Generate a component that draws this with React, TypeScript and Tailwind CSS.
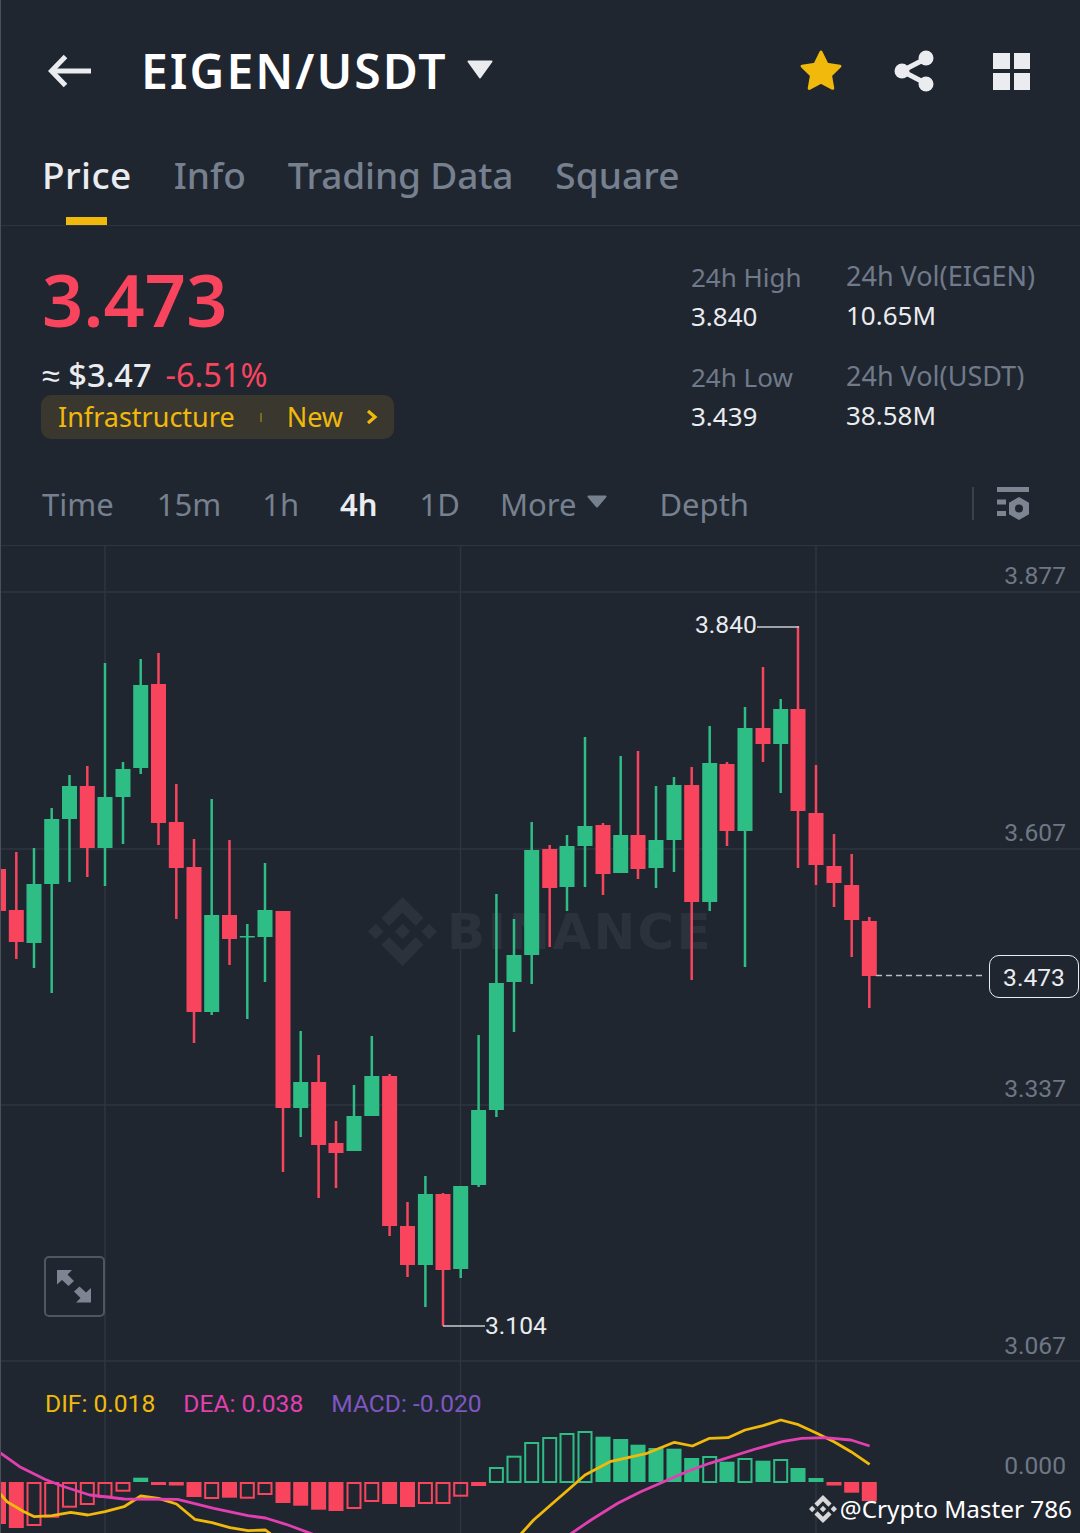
const RED = "#f9445e";
const GREEN = "#2ebd85";

type C = [number, "r" | "g", number, number, number, number];
const candles: C[] = [
  [-1.5, "r", 869, 869, 911, 911],
  [16.3, "r", 852, 910, 942, 959],
  [34, "g", 848, 884, 943, 968],
  [51.7, "g", 808, 819, 884, 993],
  [69.5, "g", 775, 786, 819, 882],
  [87.3, "r", 766, 786, 848, 877],
  [105, "g", 663, 797, 848, 886],
  [123, "g", 762, 769, 797, 844],
  [140.7, "g", 659, 685, 768, 774],
  [158.5, "r", 653, 684, 823, 845],
  [176.3, "r", 784, 822, 868, 919],
  [194, "r", 839, 867, 1012, 1043],
  [211.7, "g", 799, 915, 1012, 1015],
  [229.5, "r", 840, 915, 939, 965],
  [247.3, "g", 924, 936, 937, 1019],
  [265, "g", 863, 910, 937, 982],
  [283, "r", 911, 911, 1108, 1172],
  [300.7, "g", 1031, 1082, 1108, 1137],
  [318.6, "r", 1055, 1082, 1145, 1198],
  [336, "r", 1121, 1143, 1153, 1188],
  [354, "g", 1085, 1116, 1151, 1151],
  [371.8, "g", 1036, 1076, 1116, 1116],
  [389.6, "r", 1074, 1076, 1226, 1236],
  [407.5, "r", 1202, 1226, 1265, 1277],
  [425.4, "g", 1176, 1194, 1265, 1307],
  [443, "r", 1193, 1194, 1270, 1326],
  [460.7, "g", 1186, 1186, 1269, 1278],
  [478.6, "g", 1035, 1110, 1185, 1187],
  [496.4, "g", 894, 983, 1110, 1117],
  [514, "g", 919, 955, 982, 1032],
  [531.7, "g", 822, 850, 955, 984],
  [549.7, "r", 845, 849, 888, 947],
  [567, "g", 835, 846, 887, 911],
  [585, "g", 737, 826, 846, 887],
  [603, "r", 823, 825, 874, 895],
  [620.7, "g", 756, 835, 873, 873],
  [638, "r", 751, 835, 869, 879],
  [656, "g", 786, 840, 868, 888],
  [674, "g", 777, 785, 840, 872],
  [691.7, "r", 767, 785, 902, 980],
  [709.7, "g", 726, 763, 902, 911],
  [727, "r", 762, 764, 831, 846],
  [745, "g", 707, 728, 831, 967],
  [763, "r", 667, 728, 744, 762],
  [780.7, "g", 699, 709, 744, 793],
  [798, "r", 626, 709, 811, 868],
  [816, "r", 765, 813, 865, 885],
  [834, "r", 834, 866, 883, 907],
  [851.7, "r", 854, 885, 920, 957],
  [869.3, "r", 917, 921, 976, 1008],
];

// x, colour, bar end y, hollow
type B = [number, "r" | "g", number, boolean];
const bars: B[] = [
  [-1.5, "r", 1524, false],
  [16.3, "r", 1528, false],
  [34, "r", 1525, true],
  [51.7, "r", 1516.7, true],
  [69.5, "r", 1506.7, true],
  [87.3, "r", 1504, true],
  [105, "r", 1496.7, true],
  [123, "r", 1490.7, true],
  [140.7, "g", 1477.7, false],
  [158.5, "r", 1485, false],
  [176.3, "r", 1485.5, false],
  [194, "r", 1497, false],
  [211.7, "r", 1498, true],
  [229.5, "r", 1497.7, false],
  [247.3, "r", 1497.7, true],
  [265, "r", 1494, true],
  [283, "r", 1503, false],
  [300.7, "r", 1505.7, false],
  [318.6, "r", 1509.7, false],
  [336, "r", 1511, false],
  [354, "r", 1508, true],
  [371.8, "r", 1501, true],
  [389.6, "r", 1504, false],
  [407.5, "r", 1507, false],
  [425.4, "r", 1503, true],
  [443, "r", 1503, true],
  [460.7, "r", 1495.7, true],
  [478.6, "r", 1486, false],
  [496.4, "g", 1467, true],
  [514, "g", 1455.7, true],
  [531.7, "g", 1442, true],
  [549.7, "g", 1437, true],
  [567, "g", 1433, true],
  [585, "g", 1431, true],
  [603, "g", 1436.7, false],
  [620.7, "g", 1439, false],
  [638, "g", 1444.7, false],
  [656, "g", 1448, false],
  [674, "g", 1448.7, false],
  [691.7, "g", 1458, false],
  [709.7, "g", 1456, true],
  [727, "g", 1461.7, false],
  [745, "g", 1458, true],
  [763, "g", 1460.7, false],
  [780.7, "g", 1459, true],
  [798, "g", 1468, false],
  [816, "g", 1478, false],
  [834, "r", 1485.5, false],
  [851.7, "r", 1492.7, false],
  [869.3, "r", 1501, false],
];

const BASE = 1482;

const dif1 =
  "-3,1490 7,1501.7 24,1511.7 34.5,1516.7 52,1515.7 70.7,1512.3 88,1515 105,1511.7 124,1506.7 140.7,1496 158.6,1498.3 176.5,1504 194.8,1519.3 212,1522.7 230,1527.7 248,1530.7 265.5,1530 272,1535";
const dif2 =
  "520,1535 533.6,1520 552.7,1503.3 570,1488.3 585,1475 610,1461.7 629,1457.3 647,1453.3 674.4,1442.3 692.4,1446 709.6,1438.3 728,1437.7 745,1430 763,1425.7 780.8,1420 798.4,1424.7 816.8,1433.3 834,1441.7 851,1451.7 869.6,1464.3";
const dea1 =
  "0,1452.7 20.7,1467.3 44.8,1479.3 62,1486 89.7,1495 124,1499 177.6,1499.3 213.8,1508.3 248,1515.7 265.5,1518 286,1524.3 315,1535";
const dea2 =
  "569,1535 591,1520 617.8,1503.3 640.7,1491.7 663.7,1481.7 686.7,1471.7 709.6,1463.3 728.8,1457.3 755.5,1449 782.3,1441.7 801.5,1438.3 824.4,1437.7 851,1440 869.6,1446";

const LOGO =
  "M16.624 13.9202l2.7175 2.7154-7.353 7.353-7.353-7.352 2.7175-2.7164 4.6355 4.6595 4.6356-4.6595zm4.6366-4.6366L24 12l-2.7154 2.7164L18.5682 12l2.6924-2.7164zm-9.272.001l2.7163 2.6914-2.7164 2.7174v-.001L9.2721 12l2.7164-2.7154zm-9.2722-.001L5.4088 12l-2.6914 2.6924L0 12l2.7164-2.7164zM11.9885.0115l7.353 7.329-2.7174 2.7154-4.6356-4.6356-4.6355 4.6595-2.7174-2.7154 7.353-7.353z";

function Chart() {
  return (
    <svg viewBox="0 546 1080 987" className="absolute inset-0 w-[1080px] h-[987px]">
      {[592, 849, 1105, 1361].map((y) => (
        <rect key={y} x="0" y={y - 0.75} width="1080" height="1.5" fill="#2f3540" />
      ))}
      {[105, 460.5, 816].map((x) => (
        <rect key={x} x={x - 0.75} y="546" width="1.5" height="987" fill="#2f3540" />
      ))}
      <path d={LOGO} fill="#2c323c" transform="translate(368 897) scale(2.875)" />
      <text x="447" y="949" fontFamily="'DejaVu Sans', sans-serif" fontWeight="700" fontSize="50" letterSpacing="2.3" fill="#2c323c">BINANCE</text>
      {candles.map(([x, c, hi, top, bot, lo]) => {
        const col = c === "r" ? RED : GREEN;
        return (
          <g key={x} fill={col}>
            <rect x={x - 1.25} y={hi} width="2.5" height={lo - hi} />
            <rect x={x - 7.5} y={top} width="15" height={Math.max(bot - top, 1.5)} />
          </g>
        );
      })}
      <path d="M757 627H799" stroke="#c9ccd1" strokeWidth="1.5" />
      <path d="M443 1326H485" stroke="#c9ccd1" strokeWidth="1.5" />
      <path d="M876 975.5H986" stroke="#b9bcc2" strokeWidth="1.5" strokeDasharray="6 4" />
      {bars.map(([x, c, y, hollow]) => {
        const col = c === "r" ? RED : GREEN;
        const t = Math.min(y, BASE);
        const h = Math.abs(y - BASE);
        return hollow ? (
          <rect key={x} x={x - 6.5} y={t + 1} width="13" height={h - 1} fill="none" stroke={col} strokeWidth="2" />
        ) : (
          <rect key={x} x={x - 7.5} y={t} width="15" height={h} fill={col} />
        );
      })}
      <g fill="none" strokeWidth="2.8" strokeLinejoin="round">
        <polyline points={dif1} stroke="#f0b90b" />
        <polyline points={dif2} stroke="#f0b90b" />
        <polyline points={dea1} stroke="#e23fb0" />
        <polyline points={dea2} stroke="#e23fb0" />
      </g>
    </svg>
  );
}

function AxisLabel({ text, y }: { text: string; y: number }) {
  return (
    <div
      className="absolute right-[14px] font-['Roboto',sans-serif] text-[24.6px] leading-[30px] text-[#6f7785]"
      style={{ top: y - 546 - 14 }}
    >
      {text}
    </div>
  );
}

export default function App() {
  return (
    <div className="relative w-[1080px] h-[1533px] overflow-hidden bg-[#1f2630] font-['Noto_Sans',sans-serif] flex flex-col">
      {/* Nav */}
      <div className="h-[142px] flex items-center pl-[48px] pr-[50px] shrink-0">
        <svg width="44" height="36" viewBox="0 0 44 36" fill="none" stroke="#eaecef" strokeWidth="5">
          <path d="M43 18H5" />
          <path d="M17.5 3.5L3.5 18L17.5 32.5" />
        </svg>
        <div className="ml-[49px] text-[48px] leading-[56px] font-semibold text-white tracking-[2px]">EIGEN/USDT</div>
        <svg width="26" height="19" viewBox="0 0 26 19" className="ml-[19px] -mt-[4px]">
          <path d="M1.5 1.5H24.5L13 17.5Z" fill="#eaecef" stroke="#eaecef" strokeWidth="2" strokeLinejoin="round" />
        </svg>
        <div className="ml-auto flex items-center">
          <svg width="44" height="44" viewBox="0 0 42 42">
            <polygon
              points="21,3 26.6,14.6 39,16.4 30,25.2 32.2,37.5 21,31.7 9.8,37.5 12,25.2 3,16.4 15.4,14.6"
              fill="#f0b90b"
              stroke="#f0b90b"
              strokeWidth="3"
              strokeLinejoin="round"
            />
          </svg>
          <svg width="40" height="42" viewBox="0 0 40 42" className="ml-[51px]">
            <path d="M8 21L33 8M8 21L33 34" stroke="#eaecef" strokeWidth="5" />
            <circle cx="8" cy="21" r="7.5" fill="#eaecef" />
            <circle cx="32" cy="8" r="7.5" fill="#eaecef" />
            <circle cx="32" cy="34" r="7.5" fill="#eaecef" />
          </svg>
          <div className="ml-[59px] grid grid-cols-2 gap-[4px] w-[37px]">
            <div className="h-[16.5px] bg-[#eaecef]" />
            <div className="h-[16.5px] bg-[#eaecef]" />
            <div className="h-[16.5px] bg-[#eaecef]" />
            <div className="h-[16.5px] bg-[#eaecef]" />
          </div>
        </div>
      </div>

      {/* Tabs */}
      <div className="relative h-[84px] shrink-0 border-b-[1.5px] border-[#2f3540] flex gap-[42px] pl-[42px] pt-[6px] text-[37px] leading-[54px] font-medium text-[#76808f]">
        <div className="text-[#eaecef] tracking-[0.4px]">Price</div>
        <div>Info</div>
        <div className="tracking-[-0.15px]">Trading Data</div>
        <div className="tracking-[0.1px]">Square</div>
        <div className="absolute left-[66px] bottom-0 w-[41px] h-[8px] bg-[#f0b90b]" />
      </div>

      {/* Stats */}
      <div className="h-[236px] shrink-0 flex pl-[42px] pt-[31px]">
        <div className="w-[649px]">
          <div className="text-[72px] leading-[84px] font-semibold tracking-[0.2px] text-[#f9445e]">3.473</div>
          <div className="flex items-center mt-[12px] h-[44px] text-[32.5px] leading-[44px]">
            <span className="font-medium text-[#eaecef]">≈ $3.47</span>
            <span className="ml-[14px] text-[#f9445e]">-6.51%</span>
          </div>
          <div className="flex items-center w-[353px] h-[44px] -ml-[1px] -mt-[2px] pl-[17px] rounded-[10px] bg-[#3a372e] text-[27px] leading-[44px] text-[#f0b90b]">
            <span>Infrastructure</span>
            <span className="ml-[25px] w-[2px] h-[9px] bg-[#7a6a22]" />
            <span className="ml-[25px]">New</span>
            <svg width="12" height="16" viewBox="0 0 12 16" className="ml-[23px]" fill="none" stroke="#f0b90b" strokeWidth="3.2">
              <path d="M2 2L9 8L2 14" />
            </svg>
          </div>
        </div>
        <div className="w-[155px] flex flex-col gap-[31px] pt-[5px] text-[26px] leading-[30px]">
          <div className="flex flex-col gap-[9px]">
            <div className="text-[#707a8a]">24h High</div>
            <div className="text-[#eaecef]">3.840</div>
          </div>
          <div className="flex flex-col gap-[9px]">
            <div className="text-[#707a8a]">24h Low</div>
            <div className="text-[#eaecef]">3.439</div>
          </div>
        </div>
        <div className="flex flex-col gap-[31px] pt-[4px] leading-[30px]">
          <div className="flex flex-col gap-[9px]">
            <div className="text-[27px] text-[#707a8a]">24h Vol(EIGEN)</div>
            <div className="text-[26px] text-[#eaecef]">10.65M</div>
          </div>
          <div className="flex flex-col gap-[9px]">
            <div className="text-[27px] text-[#707a8a]">24h Vol(USDT)</div>
            <div className="text-[26px] text-[#eaecef]">38.58M</div>
          </div>
        </div>
      </div>

      {/* Intervals */}
      <div className="relative h-[84px] shrink-0 border-b-[1.5px] border-[#2f3540] flex items-center pl-[42px] pt-[1px] text-[31px] leading-[44px] text-[#76808f]">
        <span>Time</span>
        <span className="ml-[43px]">15m</span>
        <span className="ml-[41px]">1h</span>
        <span className="ml-[41px] font-semibold text-[#eaecef]">4h</span>
        <span className="ml-[42px]">1D</span>
        <span className="ml-[40px]">More</span>
        <svg width="20" height="13" viewBox="0 0 20 13" className="ml-[11px] -mt-[6px]">
          <path d="M1.5 1.5H18.5L10 11.5Z" fill="#76808f" stroke="#76808f" strokeWidth="2" strokeLinejoin="round" />
        </svg>
        <span className="ml-[52px]">Depth</span>
        <div className="ml-auto mr-[106px] -mt-[1px] w-[2.5px] h-[33px] bg-[#3a414d]" />
        <svg width="34" height="34" viewBox="0 0 34 34" className="absolute left-[996px] top-[24px]" fill="#7d8592">
          <rect x="1" y="1" width="32" height="5" />
          <rect x="1" y="13.5" width="9" height="5" />
          <rect x="1" y="25" width="9" height="5" />
          <path fillRule="evenodd" d="M23 11l10 5.7v11.6L23 34l-10-5.7V16.7zM23 18.5a4 4 0 100 8 4 4 0 000-8z" />
        </svg>
      </div>

      {/* Chart */}
      <div className="relative flex-1">
        <Chart />
        <AxisLabel text="3.877" y={575} />
        <AxisLabel text="3.607" y={832} />
        <AxisLabel text="3.337" y={1088} />
        <AxisLabel text="3.067" y={1345} />
        <AxisLabel text="0.000" y={1465} />
        <div className="absolute left-[695px] top-[64px] font-['Roboto',sans-serif] text-[24.6px] leading-[30px] text-[#eaecef]">3.840</div>
        <div className="absolute left-[485px] top-[765px] font-['Roboto',sans-serif] text-[24.6px] leading-[30px] text-[#eaecef]">3.104</div>
        <div className="absolute left-[989px] top-[409px] w-[90px] h-[43px] pt-[3px] rounded-[10px] border-[1.5px] border-[#eaecef] bg-[#1f2630] flex items-center justify-center font-['Roboto',sans-serif] text-[24.6px] text-[#eaecef]">
          3.473
        </div>
        <div className="absolute left-[44px] top-[710px] w-[61px] h-[61px] rounded-[5px] border-2 border-[#4f5663] flex items-center justify-center">
          <svg width="60" height="60" viewBox="0 0 60 60" className="shrink-0" fill="#7d8592">
            <path d="M12 13H27L22.5 17.5L29 24L23.5 29L17 23L12 27.5Z" />
            <path d="M46 45.5H31L35.5 41L29 34.5L34.5 29.5L41 35.5L46 31Z" />
          </svg>
        </div>
        <div className="absolute left-[45px] top-[843px] flex gap-[28px] font-['Roboto',sans-serif] text-[24.6px] leading-[30px]">
          <span className="text-[#f0b90b]">DIF: 0.018</span>
          <span className="text-[#e23fb0]">DEA: 0.038</span>
          <span className="text-[#7e57c2]">MACD: -0.020</span>
        </div>
        <div className="absolute right-[8px] bottom-[6px] flex items-center gap-[3px]">
          <svg width="28" height="28" viewBox="0 0 24 24" fill="#d8d8d8">
            <path d={LOGO} />
          </svg>
          <span className="text-[24.3px] leading-[36px] text-white">@Crypto Master 786</span>
        </div>
      </div>

      <div className="absolute left-0 top-0 w-[1px] h-full bg-[#4a4f5a]" />
    </div>
  );
}
